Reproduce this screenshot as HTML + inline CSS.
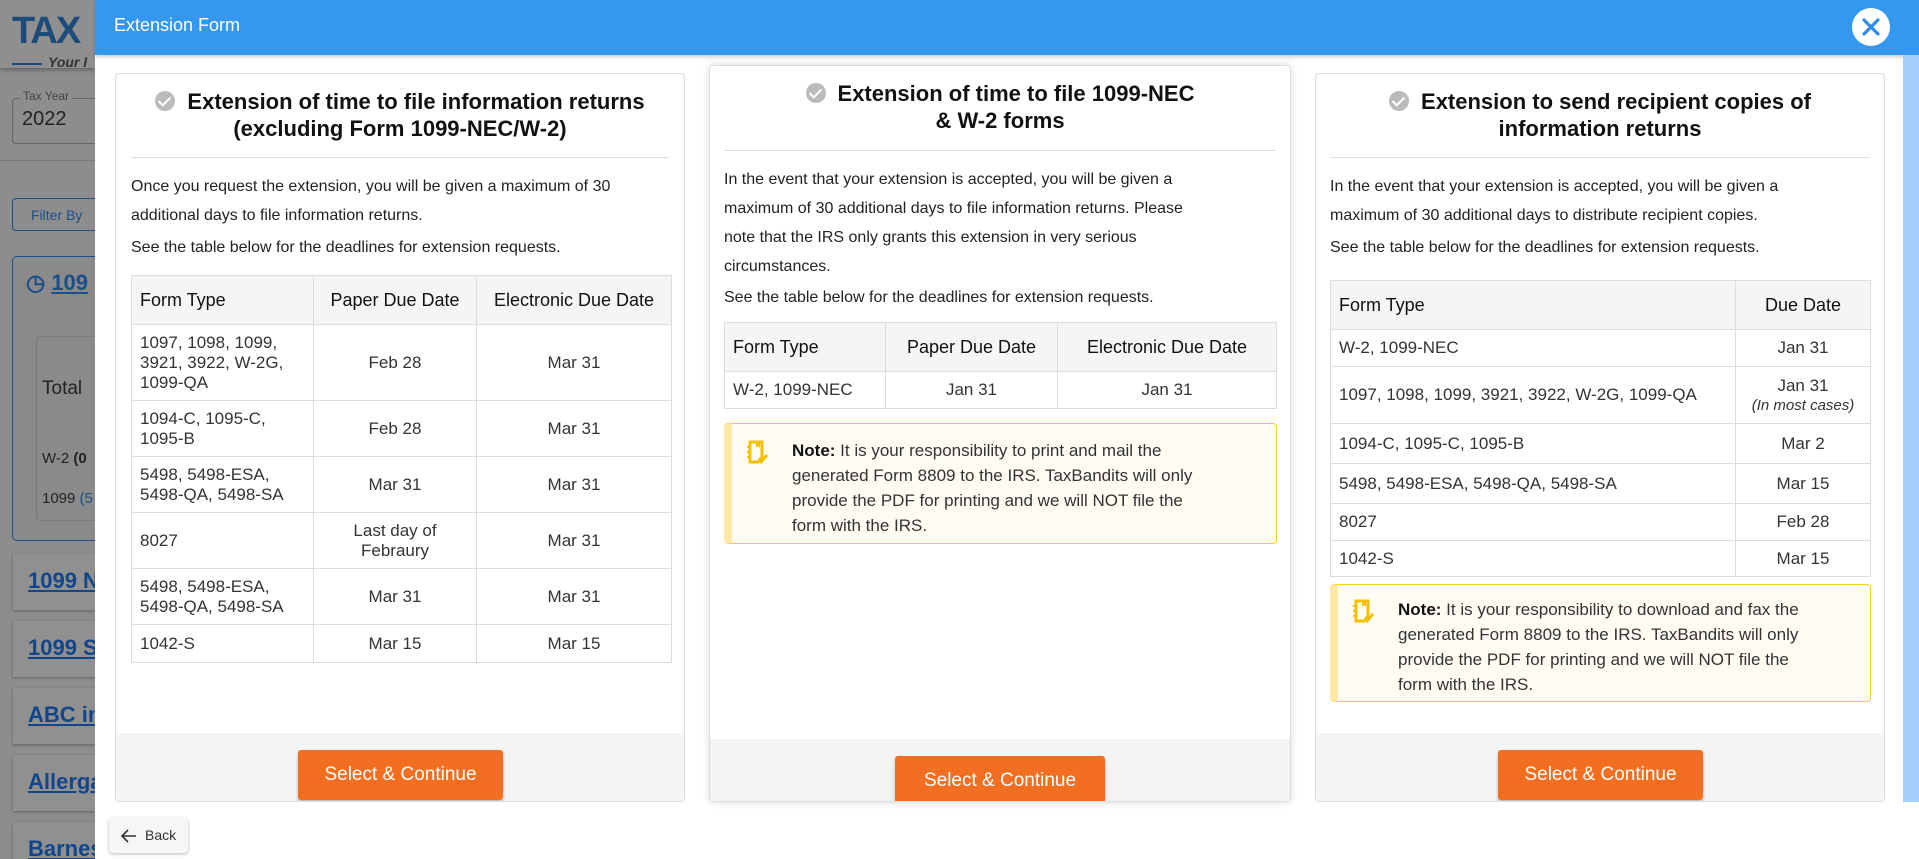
<!DOCTYPE html>
<html><head><meta charset="utf-8"><style>
*{box-sizing:border-box;margin:0;padding:0}
body{width:1919px;height:859px;overflow:hidden;position:relative;background:#fff;font-family:"Liberation Sans",sans-serif;color:#222}
.abs{position:absolute}
.bg{left:0;top:0;width:95px;height:859px;background:#8d8d8d;overflow:hidden}
.card{position:absolute;background:#fff;border:1px solid #ddd;border-radius:4px;overflow:hidden}
.h{position:absolute;left:0;right:0;text-align:center;font-weight:bold;font-size:22px;line-height:27px;color:#111}
.chk{display:inline-block;width:20px;height:20px;border-radius:50%;background:#bbb;vertical-align:-2px;margin-right:12px;position:relative}
.chk:after{content:"";position:absolute;left:6px;top:3px;width:5px;height:10px;border:solid #fff;border-width:0 2px 2px 0;transform:rotate(45deg)}
.div{position:absolute;height:1px;background:#ddd}
.p{position:absolute;font-size:16px;line-height:29px;color:#222;white-space:nowrap}
table{position:absolute;border-collapse:collapse;font-size:17px;color:#333}
td,th{border:1px solid #ddd;padding:0 8px;font-weight:normal}
th{background:#f5f5f5;color:#111;font-size:18px}
.c{text-align:center}
.foot{position:absolute;left:0;right:0;bottom:0;background:#f4f4f4}
.btn{position:absolute;background:#f26f22;color:#fff;font-size:19px;text-align:center;border-radius:3px;box-shadow:0 2px 3px rgba(0,0,0,.25)}
.note{position:absolute;background:#fffcf3;border:1px solid #f8cd2a;border-left:8px solid #fde8a6;border-radius:4px;font-size:17px;line-height:25px;color:#333;white-space:nowrap}
.note b{color:#111}
</style></head><body>
<div class="abs bg">
 <div class="abs" style="left:0;top:0;width:95px;height:68px;background:#8f8f8f;box-shadow:0 2px 4px rgba(0,0,0,.3)"></div>
 <div class="abs" style="left:12px;top:10px;font-size:38px;font-weight:bold;color:#1e4c7a;letter-spacing:-2px">TAX</div>
 <div class="abs" style="left:12px;top:63px;width:30px;height:2px;background:#1e4c7a"></div>
 <div class="abs" style="left:48px;top:54px;font-size:14px;font-style:italic;font-weight:bold;color:#333">Your I</div>
 <div class="abs" style="left:12px;top:98px;width:100px;height:46px;border:1px solid #666;border-radius:4px"></div>
 <div class="abs" style="left:20px;top:89px;font-size:12px;color:#444;background:#8d8d8d;padding:0 3px">Tax Year</div>
 <div class="abs" style="left:22px;top:108px;font-size:20px;color:#222">2022</div>
 <div class="abs" style="left:0;top:160px;width:95px;height:1px;background:#7a7a7a"></div>
 <div class="abs" style="left:12px;top:198px;width:100px;height:33px;border:1px solid #1a4f8a;border-radius:4px;font-size:14px;color:#1a4f8a;padding:8px 0 0 18px">Filter By</div>
 <div class="abs" style="left:12px;top:256px;width:100px;height:285px;border:1px solid #1a4f8a;border-radius:5px;background:#8a8a8a"></div>
 <div class="abs" style="left:26px;top:270px;font-size:22px;color:#1a4f8a;font-weight:bold">◷ <u>109</u></div>
 <div class="abs" style="left:36px;top:336px;width:70px;height:185px;border:1px solid #7a7a7a;border-radius:4px"></div>
 <div class="abs" style="left:42px;top:378px;font-size:19px;color:#222">Total</div>
 <div class="abs" style="left:42px;top:450px;font-size:15px;color:#222">W-2 <b>(0</b></div>
 <div class="abs" style="left:42px;top:490px;font-size:15px;color:#222">1099 <span style="color:#1a4f8a">(5</span></div>
 <div class="abs" style="left:13px;top:554px;width:90px;height:56px;background:#909090;box-shadow:0 1px 3px rgba(0,0,0,.3);font-size:22px;font-weight:bold;color:#12458a;padding:14px 0 0 15px"><u>1099 N</u></div>
 <div class="abs" style="left:13px;top:621px;width:90px;height:56px;background:#909090;box-shadow:0 1px 3px rgba(0,0,0,.3);font-size:22px;font-weight:bold;color:#12458a;padding:14px 0 0 15px"><u>1099 S</u></div>
 <div class="abs" style="left:13px;top:688px;width:90px;height:56px;background:#909090;box-shadow:0 1px 3px rgba(0,0,0,.3);font-size:22px;font-weight:bold;color:#12458a;padding:14px 0 0 15px"><u>ABC in</u></div>
 <div class="abs" style="left:13px;top:755px;width:90px;height:56px;background:#909090;box-shadow:0 1px 3px rgba(0,0,0,.3);font-size:22px;font-weight:bold;color:#12458a;padding:14px 0 0 15px"><u>Allerga</u></div>
 <div class="abs" style="left:13px;top:822px;width:90px;height:56px;background:#909090;box-shadow:0 1px 3px rgba(0,0,0,.3);font-size:22px;font-weight:bold;color:#12458a;padding:14px 0 0 15px"><u>Barnes</u></div>
</div>
<div class="abs" style="left:95px;top:0;width:1824px;height:55px;background:#3497f0;box-shadow:0 2px 4px rgba(0,0,0,.2)"></div>
<div class="abs" style="left:114px;top:15px;font-size:18px;color:#fff">Extension Form</div>
<div class="abs" style="left:1852px;top:8px;width:38px;height:38px;border-radius:50%;background:#fff"></div>
<svg class="abs" style="left:1860px;top:16px" width="22" height="22" viewBox="0 0 22 22"><path d="M4 4L18 18M18 4L4 18" stroke="#2f8de6" stroke-width="3.2" stroke-linecap="round"/></svg>
<div class="abs" style="left:1903px;top:55px;width:16px;height:747px;background:#a3d0fb"></div>

<!-- Card 1 -->
<div class="card" style="left:115px;top:73px;width:570px;height:729px">
 <div class="h" style="top:14px"><span class="chk"></span>Extension of time to file information returns<br>(excluding Form 1099-NEC/W-2)</div>
 <div class="div" style="left:15px;right:15px;top:83px"></div>
 <div class="p" style="left:15px;top:98px">Once you request the extension, you will be given a maximum of 30<br>additional days to file information returns.</div>
 <div class="p" style="left:15px;top:159px">See the table below for the deadlines for extension requests.</div>
 <table style="left:15px;top:201px;width:541px">
  <tr style="height:49px"><th style="text-align:left;width:182px">Form Type</th><th class="c" style="width:163px">Paper Due Date</th><th class="c">Electronic Due Date</th></tr>
  <tr style="height:76px"><td style="line-height:20px">1097, 1098, 1099, 3921, 3922, W-2G, 1099-QA</td><td class="c">Feb 28</td><td class="c">Mar 31</td></tr>
  <tr style="height:56px"><td style="line-height:20px">1094-C, 1095-C, 1095-B</td><td class="c">Feb 28</td><td class="c">Mar 31</td></tr>
  <tr style="height:56px"><td style="line-height:20px">5498, 5498-ESA, 5498-QA, 5498-SA</td><td class="c">Mar 31</td><td class="c">Mar 31</td></tr>
  <tr style="height:56px"><td>8027</td><td class="c" style="line-height:20px">Last day of Febraury</td><td class="c">Mar 31</td></tr>
  <tr style="height:56px"><td style="line-height:20px">5498, 5498-ESA, 5498-QA, 5498-SA</td><td class="c">Mar 31</td><td class="c">Mar 31</td></tr>
  <tr style="height:38px"><td>1042-S</td><td class="c">Mar 15</td><td class="c">Mar 15</td></tr>
 </table>
 <div class="foot" style="height:68px"></div>
 <div class="btn" style="left:182px;top:676px;width:205px;height:50px;line-height:50px">Select &amp; Continue</div>
</div>

<!-- Card 2 -->
<div class="card" style="left:709px;top:65px;width:582px;height:737px;box-shadow:0 0 8px rgba(0,0,0,.15)">
 <div class="h" style="top:14px"><span class="chk"></span>Extension of time to file 1099-NEC<br>&amp; W-2 forms</div>
 <div class="div" style="left:14px;right:14px;top:84px"></div>
 <div class="p" style="left:14px;top:99px">In the event that your extension is accepted, you will be given a<br>maximum of 30 additional days to file information returns. Please<br>note that the IRS only grants this extension in very serious<br>circumstances.</div>
 <div class="p" style="left:14px;top:217px">See the table below for the deadlines for extension requests.</div>
 <table style="left:14px;top:256px;width:553px">
  <tr style="height:49px"><th style="text-align:left;width:161px">Form Type</th><th class="c" style="width:172px">Paper Due Date</th><th class="c">Electronic Due Date</th></tr>
  <tr style="height:37px"><td>W-2, 1099-NEC</td><td class="c">Jan 31</td><td class="c">Jan 31</td></tr>
 </table>
 <div class="note" style="left:14px;top:357px;width:553px;height:121px;padding:14px 20px 0 60px">
  <svg class="abs" style="left:14px;top:15px" width="24" height="28" viewBox="0 0 24 28"><path d="M4 3h12v15l-4 5H4z" fill="none" stroke="#f5c000" stroke-width="3"/><path d="M1 8h4M1 13h4M1 18h4" stroke="#f5c000" stroke-width="2"/><path d="M10 3v6l2-2 2 2V3" fill="#f5c000"/><path d="M14 24l7-8" stroke="#f5c000" stroke-width="3"/></svg>
  <b>Note:</b> It is your responsibility to print and mail the<br>generated Form 8809 to the IRS. TaxBandits will only<br>provide the PDF for printing and we will NOT file the<br>form with the IRS.</div>
 <div class="foot" style="height:62px"></div>
 <div class="btn" style="left:185px;top:690px;width:210px;height:50px;line-height:50px">Select &amp; Continue</div>
</div>

<!-- Card 3 -->
<div class="card" style="left:1315px;top:73px;width:570px;height:729px">
 <div class="h" style="top:14px"><span class="chk"></span>Extension to send recipient copies of<br>information returns</div>
 <div class="div" style="left:14px;right:14px;top:83px"></div>
 <div class="p" style="left:14px;top:98px">In the event that your extension is accepted, you will be given a<br>maximum of 30 additional days to distribute recipient copies.</div>
 <div class="p" style="left:14px;top:159px">See the table below for the deadlines for extension requests.</div>
 <table style="left:14px;top:206px;width:541px">
  <tr style="height:49px"><th style="text-align:left">Form Type</th><th class="c" style="width:135px">Due Date</th></tr>
  <tr style="height:37px"><td>W-2, 1099-NEC</td><td class="c">Jan 31</td></tr>
  <tr style="height:57px"><td>1097, 1098, 1099, 3921, 3922, W-2G, 1099-QA</td><td class="c" style="line-height:19px">Jan 31<br><i style="font-size:15px">(In most cases)</i></td></tr>
  <tr style="height:40px"><td>1094-C, 1095-C, 1095-B</td><td class="c">Mar 2</td></tr>
  <tr style="height:40px"><td>5498, 5498-ESA, 5498-QA, 5498-SA</td><td class="c">Mar 15</td></tr>
  <tr style="height:37px"><td>8027</td><td class="c">Feb 28</td></tr>
  <tr style="height:36px"><td>1042-S</td><td class="c">Mar 15</td></tr>
 </table>
 <div class="note" style="left:14px;top:510px;width:541px;height:118px;padding:12px 20px 0 60px">
  <svg class="abs" style="left:14px;top:13px" width="24" height="28" viewBox="0 0 24 28"><path d="M4 3h12v15l-4 5H4z" fill="none" stroke="#f5c000" stroke-width="3"/><path d="M1 8h4M1 13h4M1 18h4" stroke="#f5c000" stroke-width="2"/><path d="M10 3v6l2-2 2 2V3" fill="#f5c000"/><path d="M14 24l7-8" stroke="#f5c000" stroke-width="3"/></svg>
  <b>Note:</b> It is your responsibility to download and fax the<br>generated Form 8809 to the IRS. TaxBandits will only<br>provide the PDF for printing and we will NOT file the<br>form with the IRS.</div>
 <div class="foot" style="height:68px"></div>
 <div class="btn" style="left:182px;top:676px;width:205px;height:50px;line-height:50px">Select &amp; Continue</div>
</div>

<div class="abs" style="left:109px;top:818px;width:79px;height:35px;background:#f6f6f6;border-radius:4px;box-shadow:0 1px 3px rgba(0,0,0,.3);font-size:14px;color:#333;line-height:35px;padding-left:36px;white-space:nowrap">
 <svg class="abs" style="left:12px;top:11px" width="16" height="14" viewBox="0 0 16 14"><path d="M15 7H2M7 1L1 7l6 6" fill="none" stroke="#333" stroke-width="1.6"/></svg>Back</div>
</body></html>
